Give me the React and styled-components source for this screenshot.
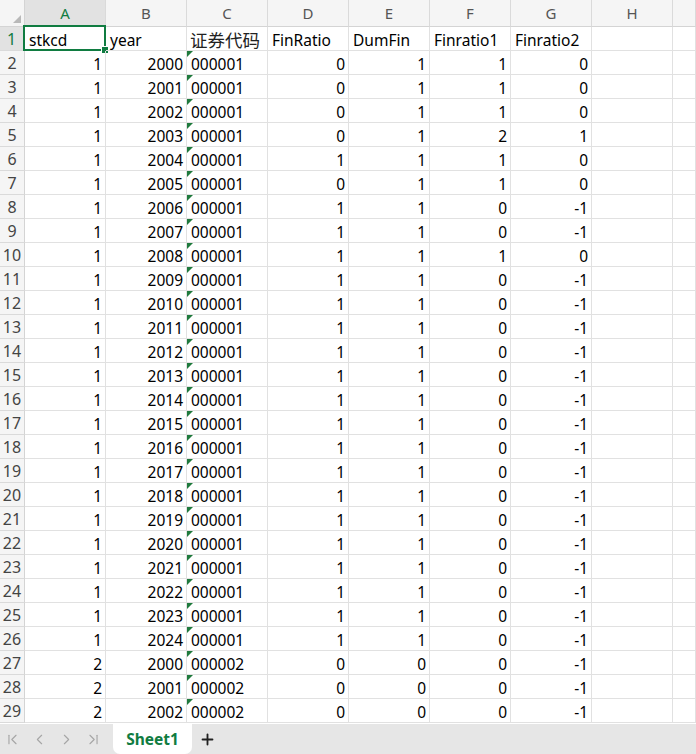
import React from 'react'
import styled, { createGlobalStyle } from 'styled-components'
import { ChevronFirst, ChevronLast, ChevronLeft, ChevronRight, Plus } from 'lucide-react'

const GlobalStyle = createGlobalStyle`
  html, body {
    margin: 0;
    padding: 0;
    background: #fff;
    overflow: hidden;
  }
  body {
    font-family: "Noto Sans", "Noto Sans CJK SC", sans-serif;
  }
`

const GREEN = '#107c41'
const LINE = '#e1e1e1'

// Page layout
const Page = styled.div`
  display: flex;
  flex-direction: column;
  width: 696px;
  height: 754px;
  overflow: hidden;
`
const Sheet = styled.div`
  flex: 1;
  display: grid;
  grid-template-columns: 25px repeat(8, 81px) 1fr;
  grid-template-rows: 27px repeat(29, 24px);
  overflow: hidden;
`

// Header components
const Corner = styled.div`
  position: relative;
  background: #f5f5f5;
  border-right: 1px solid #d4d4d4;
  border-bottom: 1px solid #d4d4d4;
  &::after {
    content: '';
    position: absolute;
    right: 3px;
    bottom: 3px;
    border-left: 8px solid transparent;
    border-bottom: 8px solid #b9b9b9;
  }
`
const ColHead = styled.div`
  display: flex;
  align-items: center;
  justify-content: center;
  font-size: 15px;
  color: ${p => (p.$active ? GREEN : '#555')};
  background: ${p => (p.$active ? '#e2e2e2' : '#f5f5f5')};
  border-right: 1px solid #dadada;
  border-bottom: ${p => (p.$active ? `2px solid ${GREEN}` : '1px solid #d4d4d4')};
  box-sizing: border-box;
`
const RowHead = styled.div`
  display: flex;
  align-items: center;
  justify-content: center;
  padding-top: 1px;
  font-size: 16px;
  color: ${p => (p.$active ? GREEN : '#444')};
  background: ${p => (p.$active ? '#e2e2e2' : '#f5f5f5')};
  border-right: ${p => (p.$active ? `2px solid ${GREEN}` : '1px solid #d4d4d4')};
  border-bottom: 1px solid #dadada;
  box-sizing: border-box;
`

// Cells
const Cell = styled.div`
  position: relative;
  display: flex;
  align-items: center;
  justify-content: ${p => (p.$right ? 'flex-end' : 'flex-start')};
  padding: 2px 3px 0 4px;
  font-size: 15.5px;
  color: #000;
  white-space: nowrap;
  border-right: 1px solid ${LINE};
  border-bottom: 1px solid ${LINE};
  box-sizing: border-box;
  overflow: visible;
  &::before {
    content: '';
    display: ${p => (p.$flag ? 'block' : 'none')};
    position: absolute;
    left: 0;
    top: 0;
    border-top: 6px solid #1f7a3d;
    border-right: 6px solid transparent;
  }
`
const CnText = styled.span`
  font-family: "Noto Sans CJK SC", sans-serif;
  font-size: 17.5px;
  color: #222;
  margin-left: -1px;
`
const Selection = styled.div`
  position: absolute;
  left: -2px;
  top: -2px;
  right: -1px;
  bottom: -1px;
  border: 2px solid ${GREEN};
  pointer-events: none;
  &::after {
    content: '';
    position: absolute;
    right: -5px;
    bottom: -5px;
    width: 6px;
    height: 6px;
    background: ${GREEN};
    border: 1px solid #fff;
  }
`

// Tab bar
const TabBar = styled.div`
  height: 30px;
  flex-shrink: 0;
  display: flex;
  align-items: stretch;
  background: #e6e6e6;
`
const NavGroup = styled.div`
  display: flex;
  align-items: center;
  gap: 10px;
  padding: 0 0 0 4px;
  width: 113px;
  box-sizing: border-box;
  color: #a6a6a6;
`
const Tab = styled.div`
  display: flex;
  align-items: center;
  justify-content: center;
  width: 79px;
  background: #fff;
  border-radius: 0 0 7px 7px;
  color: ${GREEN};
  font-weight: 700;
  font-size: 15.5px;
`
const AddButton = styled.div`
  display: flex;
  align-items: center;
  padding-left: 7px;
  color: #222;
`

const cols = ['A', 'B', 'C', 'D', 'E', 'F', 'G', 'H', '']

const rows = [
  [1, 2000, '000001', 0, 1, 1, 0],
  [1, 2001, '000001', 0, 1, 1, 0],
  [1, 2002, '000001', 0, 1, 1, 0],
  [1, 2003, '000001', 0, 1, 2, 1],
  [1, 2004, '000001', 1, 1, 1, 0],
  [1, 2005, '000001', 0, 1, 1, 0],
  [1, 2006, '000001', 1, 1, 0, -1],
  [1, 2007, '000001', 1, 1, 0, -1],
  [1, 2008, '000001', 1, 1, 1, 0],
]
for (let y = 2009; y <= 2024; y++) rows.push([1, y, '000001', 1, 1, 0, -1])
for (let y = 2000; y <= 2002; y++) rows.push([2, y, '000002', 0, 0, 0, -1])

const App = () => (
  <Page>
    <GlobalStyle />
    <Sheet>
      <Corner />
      {cols.map((c, i) => (
        <ColHead key={'h' + i} $active={c === 'A'}>{c}</ColHead>
      ))}

      <RowHead $active>1</RowHead>
      <Cell>
        stkcd
        <Selection />
      </Cell>
      <Cell>year</Cell>
      <Cell><CnText>证券代码</CnText></Cell>
      <Cell>FinRatio</Cell>
      <Cell>DumFin</Cell>
      <Cell>Finratio1</Cell>
      <Cell>Finratio2</Cell>
      <Cell />
      <Cell />

      {rows.map((r, i) => (
        <React.Fragment key={i}>
          <RowHead>{i + 2}</RowHead>
          {r.map((v, j) => (
            <Cell key={j} $right={j !== 2} $flag={j === 2}>{v}</Cell>
          ))}
          <Cell />
          <Cell />
        </React.Fragment>
      ))}
    </Sheet>
    <TabBar>
      <NavGroup>
        <ChevronFirst size={17} strokeWidth={1.6} />
        <ChevronLeft size={17} strokeWidth={1.6} />
        <ChevronRight size={17} strokeWidth={1.6} />
        <ChevronLast size={17} strokeWidth={1.6} />
      </NavGroup>
      <Tab>Sheet1</Tab>
      <AddButton>
        <Plus size={17} strokeWidth={2.6} />
      </AddButton>
    </TabBar>
  </Page>
)

export default App
